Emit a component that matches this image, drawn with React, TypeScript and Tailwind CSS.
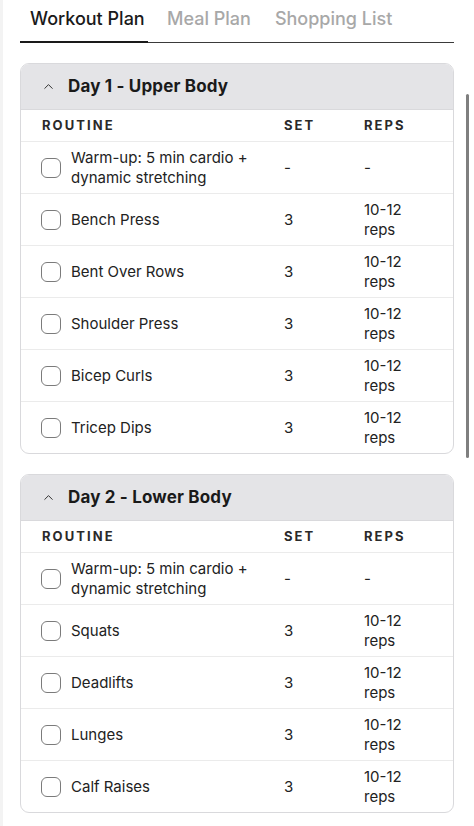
import React from 'react';
import { ChevronUp } from 'lucide-react';

interface Exercise {
    name: string;
    set: string;
    reps: string;
}

interface DayProps {
    title: string;
    exercises: Exercise[];
}

const dayOne: Exercise[] = [
    { name: 'Warm-up: 5 min cardio + dynamic stretching', set: '-', reps: '-' },
    { name: 'Bench Press', set: '3', reps: '10-12 reps' },
    { name: 'Bent Over Rows', set: '3', reps: '10-12 reps' },
    { name: 'Shoulder Press', set: '3', reps: '10-12 reps' },
    { name: 'Bicep Curls', set: '3', reps: '10-12 reps' },
    { name: 'Tricep Dips', set: '3', reps: '10-12 reps' }
];

const dayTwo: Exercise[] = [
    { name: 'Warm-up: 5 min cardio + dynamic stretching', set: '-', reps: '-' },
    { name: 'Squats', set: '3', reps: '10-12 reps' },
    { name: 'Deadlifts', set: '3', reps: '10-12 reps' },
    { name: 'Lunges', set: '3', reps: '10-12 reps' },
    { name: 'Calf Raises', set: '3', reps: '10-12 reps' }
];

const DayCard: React.FC<DayProps> = ({ title, exercises }) => {
    return (
        <section className="rounded-[9px] border border-[#d9d9dc] overflow-hidden bg-white">
            <div className="h-[46px] bg-[#e4e4e7] flex items-center pl-[20px] gap-[12px] border-b border-[#d9d9dc]">
                <ChevronUp size={15} strokeWidth={1.6} className="text-[#333]" />
                <h3 className="text-[17px] font-bold text-[#1a1a1a] tracking-[0.01em]">{title}</h3>
            </div>
            <div className="grid grid-cols-[242px_80px_1fr] h-[31px] items-center text-[13px] font-bold tracking-[0.16em] text-[#2a2a2a]">
                <div className="pl-[21px]">ROUTINE</div>
                <div className="pl-[21px]">SET</div>
                <div className="pl-[21px]">REPS</div>
            </div>
            {exercises.map((item, index) => (
                <div
                    key={`${item.name}-${index}`}
                    className="grid grid-cols-[242px_80px_1fr] h-[52px] items-center border-t border-[#ebebeb] text-[15px] leading-[20px] text-[#222]"
                >
                    <div className="pl-[20px] flex items-center gap-[10px]">
                        <span className="w-[20px] h-[20px] shrink-0 rounded-[6px] border-[1.5px] border-[#7b7b7b]" />
                        <span className="pr-2">{item.name}</span>
                    </div>
                    <div className="pl-[21px]">{item.set}</div>
                    <div className="pl-[21px] w-[85px]">{item.reps}</div>
                </div>
            ))}
        </section>
    );
};

export default function App() {
    return (
        <div
            className="relative w-[474px] h-[826px] overflow-hidden bg-white"
            style={{ fontFamily: 'Inter, "Noto Sans", sans-serif' }}
        >
            <div className="absolute left-0 top-0 bottom-0 w-[3px] bg-[#f3f3f3]" />
            <div className="absolute left-[466px] top-[94px] w-[3px] h-[364px] rounded-full bg-[#7f7f7f]" />

            <div className="px-[20px]">
                <nav className="flex h-[43px] border-b border-[#3a3a3a] text-[18px]">
                    <div className="relative w-[128px] pl-[10px] pt-[5px] text-[#1a1a1a] font-medium">
                        Workout Plan
                        <span className="absolute left-0 right-0 bottom-[-1px] h-[2px] bg-[#1a1a1a]" />
                    </div>
                    <div className="pl-[19px] pt-[5px] text-[#a8a8a8] font-medium">Meal Plan</div>
                    <div className="pl-[24px] pt-[5px] text-[#a8a8a8] font-medium">Shopping List</div>
                </nav>

                <div className="mt-[20px] flex flex-col gap-[20px]">
                    <DayCard title="Day 1 - Upper Body" exercises={dayOne} />
                    <DayCard title="Day 2 - Lower Body" exercises={dayTwo} />
                </div>
            </div>
        </div>
    );
}
